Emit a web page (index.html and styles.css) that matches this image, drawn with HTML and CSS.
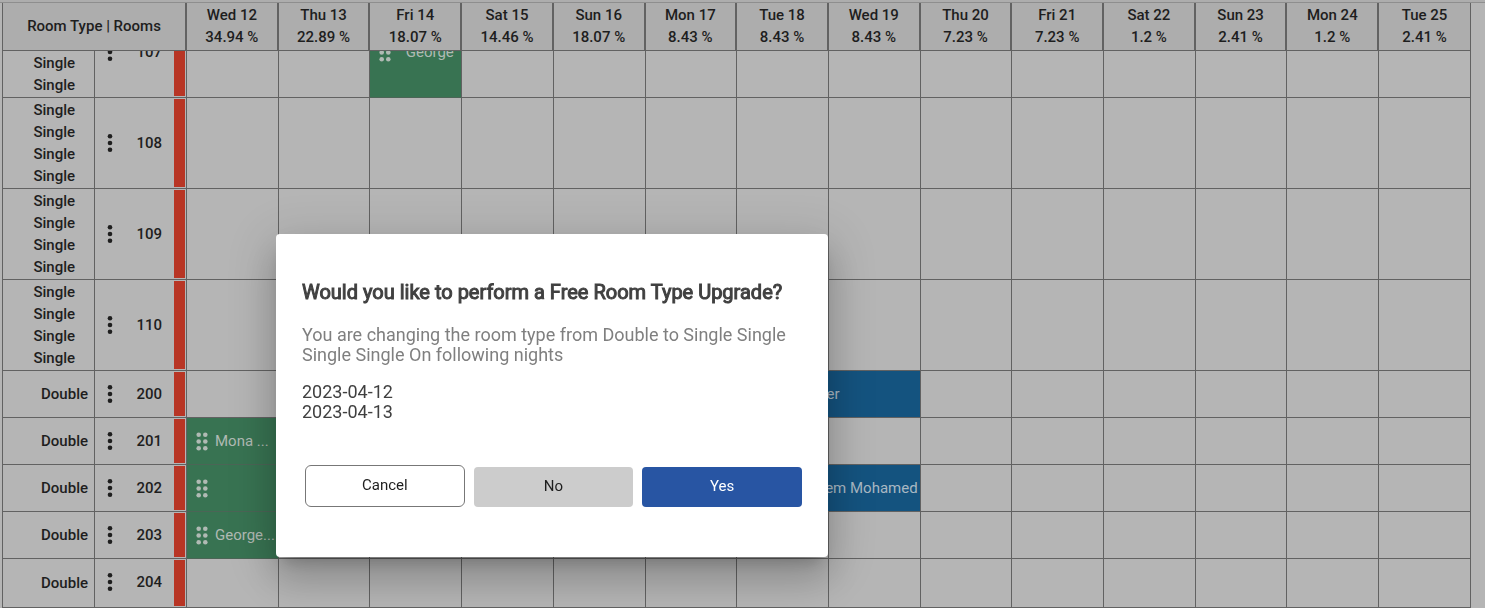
FILE: index.html
```html
<!DOCTYPE html>
<html lang="en">
<head>
    <meta charset="UTF-8">
    <meta name="viewport" content="width=device-width, initial-scale=1.0">
    <title>Room Rack</title>
    <link rel="stylesheet" href="styles.css">
</head>
<body>
    <!-- Icons -->
    <svg class="icon-defs" aria-hidden="true">
        <symbol id="icon-more" viewBox="0 0 6 20">
            <circle cx="3" cy="3.3" r="2.3"/><circle cx="3" cy="10" r="2.3"/><circle cx="3" cy="16.7" r="2.3"/>
        </symbol>
        <symbol id="icon-grip" viewBox="0 0 12 20">
            <circle cx="2.7" cy="3.8" r="2.3"/><circle cx="9.3" cy="3.8" r="2.3"/>
            <circle cx="2.7" cy="10.5" r="2.3"/><circle cx="9.3" cy="10.5" r="2.3"/>
            <circle cx="2.7" cy="17.2" r="2.3"/><circle cx="9.3" cy="17.2" r="2.3"/>
        </symbol>
    </svg>

    <!-- Room rack -->
    <div class="rack">
        <div class="rack-head">
            <table class="rack-table">
                <colgroup><col class="col-type"><col class="col-room"><col span="14"></colgroup>
                <thead>
                    <tr id="rack-days">
                        <th colspan="2">Room Type | Rooms</th>
                    </tr>
                </thead>
            </table>
        </div>
        <div class="rack-body" id="rack-body">
            <table class="rack-table">
                <colgroup><col class="col-type"><col class="col-room"><col span="14"></colgroup>
                <tbody id="rack-rooms"></tbody>
            </table>
        </div>
    </div>

    <!-- Upgrade dialog -->
    <div class="dialog" role="dialog" aria-labelledby="dialog-title">
        <h2 id="dialog-title">Would you like to perform a Free Room Type Upgrade?</h2>
        <p class="message">You are changing the room type from Double to Single Single Single Single On following nights</p>
        <p class="nights">2023-04-12<br>2023-04-13</p>
        <div class="actions">
            <button class="btn btn-cancel" type="button">Cancel</button>
            <button class="btn btn-no" type="button">No</button>
            <button class="btn btn-yes" type="button">Yes</button>
        </div>
    </div>

    <script src="script.js"></script>
</body>
</html>
```
FILE: styles.css
```css
* {
    box-sizing: border-box;
}
body {
    margin: 0;
    background-color: #b5b5b5;
    color: #1e1e1e;
    font-family: Roboto, "Liberation Sans", sans-serif;
    font-size: 15px;
    line-height: 22px;
}
.icon-defs {
    display: none;
}
.icon {
    display: block;
    flex: none;
    height: 20px;
    fill: currentColor;
}
.icon-more {
    width: 6px;
}
.icon-grip {
    width: 12px;
}

/* Rack */
.rack {
    display: flex;
    flex-direction: column;
    height: 100vh;
    border-top: 2px solid #adadad;
}
.rack-head, .rack-body {
    padding: 0 14px 0 2px;
}
.rack-head {
    border-top: 1px solid #8e8e8e;
}
.rack-body {
    flex: 1;
    min-height: 0;
    overflow-y: auto;
    scrollbar-width: none;
}
.rack-table {
    width: 100%;
    table-layout: fixed;
    border-collapse: separate;
    border-spacing: 0;
    border-left: 1px solid #626262;
}
.col-type, .col-room {
    width: 92px;
}
.rack-table th, .rack-table td {
    padding: 0;
    text-align: center;
    font-weight: 500;
    border-right: 1px solid #626262;
    border-bottom: 1px solid #626262;
}
.rack-table thead th {
    height: 48px;
    padding-bottom: 2px;
    background-color: #adadad;
    border-right-width: 2px;
}
.rack-table thead th:last-child {
    border-right-width: 1px;
}
.rack-table tbody tr {
    height: 47px;
}
.rack-table tbody tr:last-child {
    height: 49px;
}
.rack-table tbody tr:last-child th {
    padding-bottom: 2px;
}
.rack-table .room-type {
    padding: 1px 6px;
    text-align: right;
}
.rack-table .room-type.long {
    padding: 1px 19px;
}
.rack-table .room-cell {
    /* housekeeping status strip */
    background: linear-gradient(#b83524, #b83524) right 1px center / 11px calc(100% - 2px) no-repeat;
    padding-right: 12px;
}
.room {
    display: flex;
    align-items: center;
    justify-content: space-between;
    padding: 0 12px;
}

/* Reservations */
.rack-table .booking {
    color: #b0bab4;
    font-weight: 400;
}
.rack-table .checked-in {
    background-color: #387352;
    border-bottom-color: #4b6556;
}
.rack-table .reserved {
    background-color: #14537f;
    text-align: right;
    padding-right: 2px;
    color: #a9b8c3;
}
.rack-table .reserved.short {
    padding-right: 80px;
}
.stay {
    display: flex;
    align-items: center;
    gap: 7px;
    padding-left: 9px;
}
.stay span {
    overflow: hidden;
    white-space: nowrap;
}
.stay.centered span {
    flex: 1;
}

/* Dialog */
.dialog {
    position: fixed;
    top: 234px;
    left: 276px;
    z-index: 2;
    width: 552px;
    padding: 46px 26px 50px;
    background-color: #fff;
    border-radius: 4px;
    box-shadow: 0 11px 15px -7px rgba(0, 0, 0, 0.2), 0 24px 38px 3px rgba(0, 0, 0, 0.14), 0 9px 46px 8px rgba(0, 0, 0, 0.12);
    color: #404040;
    font-size: 18px;
    line-height: 20px;
}
.dialog h2 {
    margin: 0 0 21px;
    font-size: 20px;
    font-weight: 400;
    line-height: 24px;
    -webkit-text-stroke: 1px #404040;
}
.dialog p {
    margin: 0 0 17px;
}
.dialog .message {
    color: #7f7f7f;
}
.dialog .nights {
    margin-bottom: 43px;
}
.actions {
    display: grid;
    grid-template-columns: repeat(3, 1fr);
    align-items: end;
    gap: 9px;
    padding-left: 3px;
}
.btn {
    height: 40px;
    padding: 0 0 2px;
    border: none;
    border-radius: 4px;
    font-family: inherit;
    font-size: 15px;
    line-height: 22px;
    color: #1e1e1e;
}
.btn-cancel {
    height: 42px;
    background-color: #fff;
    border: 1px solid #777;
    border-radius: 6px;
}
.btn-no {
    background-color: #ccc;
}
.btn-yes {
    background-color: #2855a3;
    color: #fff;
}
```
FILE: script.js
```js
const days = [
    ['Wed 12', '34.94 %'], ['Thu 13', '22.89 %'], ['Fri 14', '18.07 %'], ['Sat 15', '14.46 %'],
    ['Sun 16', '18.07 %'], ['Mon 17', '8.43 %'], ['Tue 18', '8.43 %'], ['Wed 19', '8.43 %'],
    ['Thu 20', '7.23 %'], ['Fri 21', '7.23 %'], ['Sat 22', '1.2 %'], ['Sun 23', '2.41 %'],
    ['Mon 24', '1.2 %'], ['Tue 25', '2.41 %']
];

const quad = 'Single Single Single Single';

// start is the index of the day column, nights the number of columns
const rooms = [
    { no: 107, type: quad, stay: { start: 2, nights: 1, name: 'George', status: 'checked-in', layout: 'centered' } },
    { no: 108, type: quad },
    { no: 109, type: quad },
    { no: 110, type: quad },
    { no: 200, type: 'Double', stay: { start: 6, nights: 2, name: 'er', status: 'reserved short' } },
    { no: 201, type: 'Double', stay: { start: 0, nights: 1, name: 'Mona ...', status: 'checked-in' } },
    { no: 202, type: 'Double', stay: { start: 0, nights: 1, name: '', status: 'checked-in' }, next: { start: 6, nights: 2, name: 'em Mohamed', status: 'reserved' } },
    { no: 203, type: 'Double', stay: { start: 0, nights: 1, name: 'George...', status: 'checked-in' } },
    { no: 204, type: 'Double' }
];

function icon(name) {
    return `<svg class="icon icon-${name}" aria-hidden="true"><use href="#icon-${name}"/></svg>`;
}

function stayCell(stay) {
    const content = stay.status === 'checked-in'
        ? `<div class="stay ${stay.layout || ''}">${icon('grip')}<span>${stay.name}</span></div>`
        : stay.name;
    return `<td class="booking ${stay.status}" colspan="${stay.nights}">${content}</td>`;
}

function roomRow(room) {
    const stays = [room.stay, room.next].filter(Boolean);
    let cells = '';
    for (let day = 0; day < days.length; day++) {
        const stay = stays.find(s => s.start === day);
        if (stay) {
            cells += stayCell(stay);
            day += stay.nights - 1;
        } else {
            cells += '<td></td>';
        }
    }
    return `
        <tr>
            <th class="room-type ${room.type === quad ? 'long' : ''}">${room.type}</th>
            <th class="room-cell"><div class="room">${icon('more')}<span>${room.no}</span></div></th>
            ${cells}
        </tr>
    `;
}

document.getElementById('rack-days').innerHTML += days.map(day => `<th>${day[0]}<br>${day[1]}</th>`).join('');
document.getElementById('rack-rooms').innerHTML = rooms.map(roomRow).join('');

// open on the last rooms
const rackBody = document.getElementById('rack-body');
rackBody.scrollTop = rackBody.scrollHeight;
```
